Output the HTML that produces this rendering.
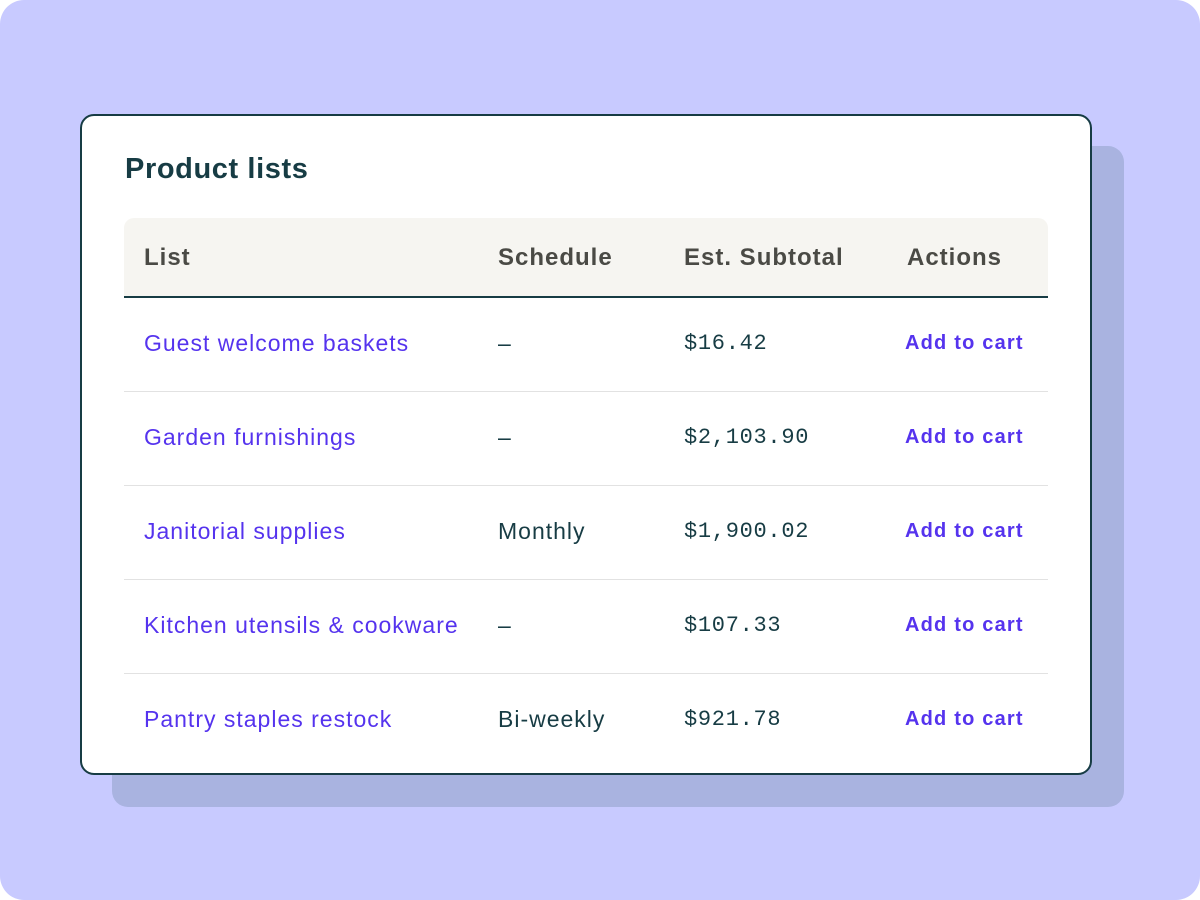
<!DOCTYPE html>
<html><head><style>
body{margin:0;background:#fff;font-family:"Liberation Sans",sans-serif;}
.bg{position:absolute;left:0;top:0;width:1200px;height:900px;background:#c8caff;border-radius:24px;}
.sh{position:absolute;left:112px;top:146px;width:1012px;height:661px;background:#a9b3e0;border-radius:16px;}
.card{position:absolute;left:80px;top:114px;width:1008px;height:657px;background:#fff;border:2px solid #173c44;border-radius:14px;}
h1{position:absolute;left:43px;top:37px;margin:0;font-size:29px;letter-spacing:0.6px;color:#173c44;font-weight:bold;}
.hd{position:absolute;left:42px;top:102px;width:924px;height:78px;background:#f6f5f1;border-radius:10px 10px 0 0;border-bottom:2px solid #173c44;}
.c{position:absolute;white-space:nowrap;}
.h{font-size:24px;letter-spacing:1px;font-weight:bold;color:#4a4a45;top:26px;}
.row{position:absolute;left:42px;width:924px;height:93px;border-bottom:1px solid #e2e2e2;}
.row .c{top:32px;font-size:23px;letter-spacing:1px;}
.l{left:20px;color:#5533ee;}
.s{left:374px;color:#173c44;}
.row .p{left:560px;color:#173c44;font-family:"Liberation Mono",monospace;font-size:22px;letter-spacing:0.7px;top:33px;}
.row .a{left:781px;color:#5533ee;font-weight:bold;font-size:20px;letter-spacing:1.2px;top:34px;}
</style></head><body>
<div class="bg"></div><div class="sh"></div>
<div class="card">
<h1>Product lists</h1>
<div class="hd">
<div class="c h" style="left:20px">List</div>
<div class="c h" style="left:374px">Schedule</div>
<div class="c h" style="left:560px">Est. Subtotal</div>
<div class="c h" style="left:783px">Actions</div>
</div>
<div class="row" style="top:182px"><div class="c l">Guest welcome baskets</div><div class="c s">–</div><div class="c p">$16.42</div><div class="c a">Add to cart</div></div>
<div class="row" style="top:276px"><div class="c l">Garden furnishings</div><div class="c s">–</div><div class="c p">$2,103.90</div><div class="c a">Add to cart</div></div>
<div class="row" style="top:370px"><div class="c l">Janitorial supplies</div><div class="c s">Monthly</div><div class="c p">$1,900.02</div><div class="c a">Add to cart</div></div>
<div class="row" style="top:464px"><div class="c l">Kitchen utensils &amp; cookware</div><div class="c s">–</div><div class="c p">$107.33</div><div class="c a">Add to cart</div></div>
<div class="row" style="top:558px;border-bottom:none"><div class="c l">Pantry staples restock</div><div class="c s">Bi-weekly</div><div class="c p">$921.78</div><div class="c a">Add to cart</div></div>
</div>
</body></html>
